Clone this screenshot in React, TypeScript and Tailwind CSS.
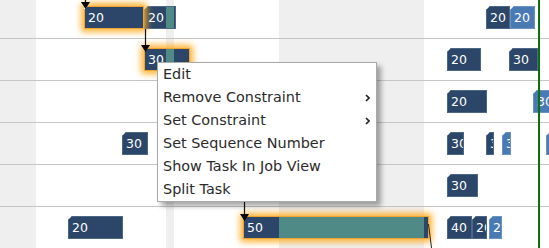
type Seg = { left: number; width: number };
type Task = {
  left: number;
  width: number;
  text: string;
  light?: boolean;
  glow?: boolean;
  segs?: Seg[];
};

const rows: Task[][] = [
  [
    { left: 84, width: 60, text: '20', glow: true },
    { left: 144, width: 32, text: '20', segs: [{ left: 22, width: 8 }] },
    { left: 486, width: 24, text: '20' },
    { left: 510, width: 25, text: '20', light: true },
  ],
  [
    { left: 144, width: 46, text: '30', glow: true, segs: [{ left: 22, width: 8 }] },
    { left: 447, width: 34, text: '20' },
    { left: 509, width: 29, text: '30' },
  ],
  [
    { left: 447, width: 40, text: '20' },
    { left: 533, width: 22, text: '30', light: true },
  ],
  [
    { left: 122, width: 26, text: '30' },
    { left: 447, width: 17, text: '30' },
    { left: 486, width: 8, text: '3' },
    { left: 502, width: 9, text: '3', light: true },
    { left: 546, width: 10, text: '3', light: true },
  ],
  [{ left: 447, width: 31, text: '30' }],
  [
    { left: 68, width: 55, text: '20' },
    { left: 243, width: 186, text: '50', glow: true, segs: [{ left: 36, width: 145 }] },
    { left: 447, width: 25, text: '40' },
    { left: 472, width: 15, text: '20' },
    { left: 489, width: 13, text: '20', light: true },
  ],
];

const menuItems = [
  { label: 'Edit' },
  { label: 'Remove Constraint', sub: true },
  { label: 'Set Constraint', sub: true },
  { label: 'Set Sequence Number' },
  { label: 'Show Task In Job View' },
  { label: 'Split Task' },
];

const chamfer = { clipPath: 'polygon(4px 0, 100% 0, 100% 100%, 0 100%, 0 4px)' };

function Bar({ t }: { t: Task }) {
  return (
    <div
      className={`absolute top-[9px] h-[23px] ${t.glow ? 'z-10 shadow-[0_0_6px_3px_rgba(255,170,30,0.9)] rounded-[1px]' : ''}`}
      style={{ left: t.left, width: t.width }}
    >
      <div
        className={`relative h-full w-full overflow-hidden border ${
          t.light ? 'bg-[#4a7ab3] border-[#6b93c2]' : 'bg-[#2b4668] border-[#4c6886]'
        } ${t.glow ? 'border-[#f2a431]' : ''}`}
        style={chamfer}
      >
        {t.segs?.map((s, i) => (
          <div key={i} className="absolute top-0 bottom-0 bg-[#4f8a87]" style={{ left: s.left - 1, width: s.width }} />
        ))}
        <span className="relative block pl-[3px] text-[12.5px] leading-[21px] text-white whitespace-nowrap">{t.text}</span>
      </div>
    </div>
  );
}

function Arrow({ x, y1, y2 }: { x: number; y1: number; y2: number }) {
  return (
    <svg className="absolute z-20" style={{ left: x - 4, top: y1 }} width={9} height={y2 - y1}>
      <line x1={4.5} y1={0} x2={4.5} y2={y2 - y1 - 6} stroke="#111" strokeWidth={1.2} />
      <polygon points={`0,${y2 - y1 - 7} 9,${y2 - y1 - 7} 4.5,${y2 - y1}`} fill="#000" />
    </svg>
  );
}

export default function App() {
  return (
    <div className="relative h-[248px] w-[549px] overflow-hidden bg-white font-['DejaVu_Sans',Verdana,sans-serif]">
      <div className="absolute inset-0 flex">
        <div className="w-[36px] bg-[#efefef]" />
        <div className="w-[130px]" />
        <div className="w-[8px] bg-[#efefef]" />
        <div className="w-[105px]" />
        <div className="w-[145px] bg-[#efefef]" />
        <div className="flex-1" />
      </div>

      <div className="relative mt-[-3px] flex flex-col">
        {rows.map((r, i) => (
          <div key={i} className="relative h-[42px] shrink-0 border-b border-[#c6c6c6]">
            {r.map((t, j) => (
              <Bar key={j} t={t} />
            ))}
          </div>
        ))}
      </div>

      <Arrow x={84.5} y1={-2} y2={9} />
      <Arrow x={144.5} y1={29} y2={52} />
      <Arrow x={243.5} y1={196} y2={221} />
      <svg className="absolute left-0 top-0 z-20" width={549} height={248}>
        <line x1={428.5} y1={224} x2={431.5} y2={248} stroke="#222" strokeWidth={1} />
      </svg>

      <div className="absolute left-[538px] top-0 z-20 h-full w-[2px] bg-[#0d6e0d]" />

      <div className="absolute left-[157px] top-[62px] z-30 w-[220px] border border-[#a9a9a9] bg-white shadow-[4px_4px_5px_rgba(0,0,0,0.35)]">
        {menuItems.map((m) => (
          <div key={m.label} className="flex h-[23px] items-center justify-between pl-[5px] pr-[6px] text-[14.4px] text-[#2a2a2a]">
            <span>{m.label}</span>
            {m.sub && (
              <svg width="5" height="8" viewBox="0 0 5 8">
                <path d="M1 1 L4 4 L1 7" fill="none" stroke="#222" strokeWidth="1.6" />
              </svg>
            )}
          </div>
        ))}
      </div>
    </div>
  );
}
